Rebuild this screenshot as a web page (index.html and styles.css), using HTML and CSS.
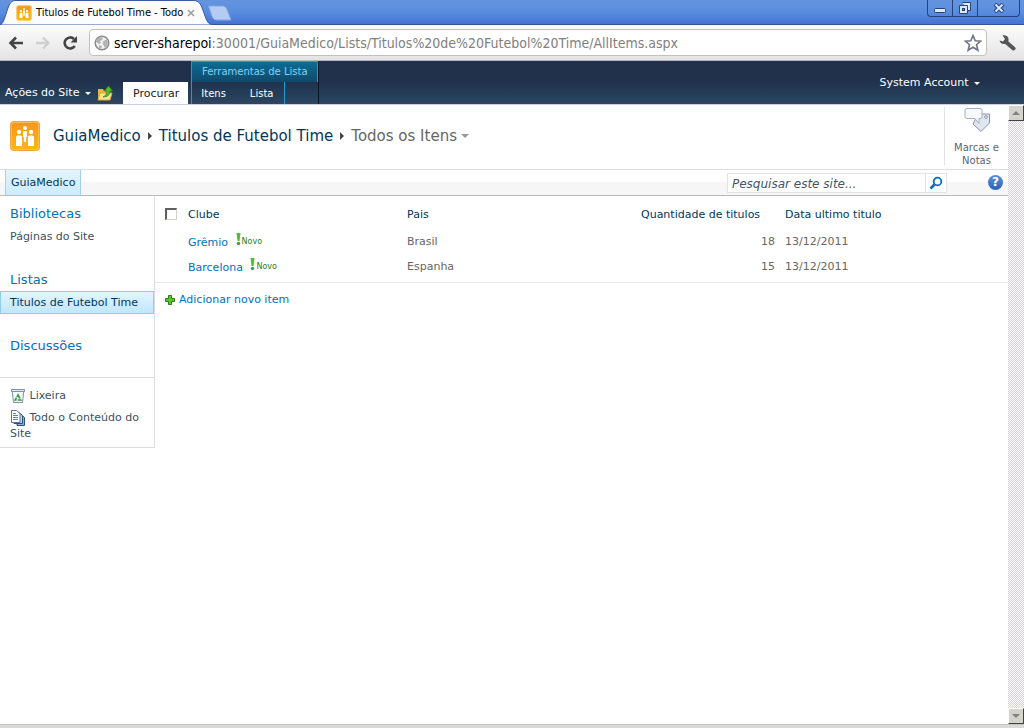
FILE: index.html
```html
<!DOCTYPE html>
<html lang="pt-BR">
<head>
    <meta charset="UTF-8">
    <title>Titulos de Futebol Time - Todos os Itens</title>
    <link rel="stylesheet" href="styles.css">
</head>
<body>
    <!-- logo do site, usado na aba e no titulo -->
    <svg class="defs" width="0" height="0" aria-hidden="true">
        <defs>
            <linearGradient id="orange" x1="0" y1="0" x2="0" y2="1">
                <stop offset="0" stop-color="#f7941d"/>
                <stop offset="1" stop-color="#ffb90f"/>
            </linearGradient>
            <symbol id="logo" viewBox="0 0 32 32">
                <rect x="1.500" y="1.500" width="29" height="29" rx="3" fill="url(#orange)" stroke="#f2a33c"/>
                <rect x="2.500" y="2.500" width="27" height="27" rx="2" fill="none" stroke="#ffcb6b" stroke-opacity=".7"/>
                <circle cx="10" cy="12" r="2.200" fill="#fff"/>
                <circle cx="16" cy="8" r="2" fill="#fff"/>
                <circle cx="22" cy="12" r="2.200" fill="#fff"/>
                <path d="M7 17q0-1.500 1.500-1.500h3q1.500 0 1.500 1.500v9H7z M19 17q0-1.500 1.500-1.500h3q1.500 0 1.500 1.500v9h-6z" fill="#fff"/>
                <path d="M14 11h4v6h-.8V22h-2.400v-5h-.8z" fill="#fff"/>
            </symbol>
        </defs>
    </svg>

    <header class="tab-strip">
        <div class="tab">
            <svg class="tab-shape" width="236" height="25" viewBox="0 0 236 25">
                <path d="M0 25C3 24 4 20 6 14C9 5 10 1 15 .5H193C200 .5 201 5 204 13C207 22 208 24 213 25z" fill="#fcfcfd" stroke="#3a5a9c"/>
                <path d="M208.500 6h14c3 0 4 2 5.500 6l3 8h-14c-3 0-4-1-5.500-5z" fill="#b4cbf3" stroke="#83a5e0"/>
            </svg>
            <svg class="tab-icon" width="16" height="16"><use href="#logo"/></svg>
            <span class="tab-title">Titulos de Futebol Time - Todo</span>
            <button class="tab-close" aria-label="Fechar guia">
                <svg width="8" height="8" viewBox="0 0 8 8"><path d="M1 1l6 6M7 1L1 7" stroke="#9b9b9b" stroke-width="1.500"/></svg>
            </button>
        </div>
        <div class="window-buttons">
            <button aria-label="Minimizar"><svg width="12" height="12" viewBox="0 0 12 12"><rect x=".5" y="6.500" width="11" height="4" rx="1" fill="#dce9ff" stroke="#24437c"/></svg></button>
            <button aria-label="Restaurar"><svg width="14" height="12" viewBox="0 0 14 12"><path d="M4.500 .5h8v8h-3M1.500 3.500h8v8h-8z" fill="#dce9ff" stroke="#24437c"/><rect x="4.500" y="6.500" width="2" height="2" fill="#5b8de0" stroke="#24437c"/></svg></button>
            <button class="close" aria-label="Fechar"><svg width="12" height="10" viewBox="0 0 12 10"><path d="M2 1l8 8M10 1L2 9" stroke="#24437c" stroke-width="4"/><path d="M2.500 1.500l7 7M9.500 1.500l-7 7" stroke="#dce9ff" stroke-width="2"/></svg></button>
        </div>
    </header>

    <div class="toolbar">
        <button aria-label="Voltar"><svg width="16" height="16" viewBox="0 0 16 16"><path d="M15 8H3M8 2.500L2.500 8L8 13.500" fill="none" stroke="#444" stroke-width="2.600"/></svg></button>
        <button aria-label="Avançar"><svg width="16" height="16" viewBox="0 0 16 16"><path d="M1 8h12M8 2.500L13.500 8L8 13.500" fill="none" stroke="#cfcfcf" stroke-width="2.400"/></svg></button>
        <button aria-label="Recarregar"><svg width="16" height="16" viewBox="0 0 16 16"><path d="M12.700 11A5.500 5.500 0 1 1 12 4" fill="none" stroke="#444" stroke-width="2.600"/><path d="M15 1v6.500H8.500z" fill="#444"/></svg></button>
        <div class="address">
            <svg width="16" height="16" viewBox="0 0 16 16"><circle cx="8" cy="8" r="6.800" fill="#f2f2f2" stroke="#8b8b8b" stroke-width="1.500"/><path d="M2.500 4.500L6 2l3 1-1 2-2 1 1 2-2 1-3-2zM9.500 6l3-1.500L14 7l-1 4-2 2-1.500-3-1-1.500zM5 10l3 1-1 3-2-1z" fill="#b3b3b3"/></svg>
            <div class="url"><span class="host">server-sharepoi</span>:30001/GuiaMedico/Lists/Titulos%20de%20Futebol%20Time/AllItems.aspx</div>
            <button aria-label="Favoritos"><svg width="18" height="18" viewBox="0 0 18 18"><path d="M9 1.500l2.200 5.200 5.500.4-4.200 3.600 1.400 5.600L9 13.300l-4.900 3 1.400-5.600L1.300 7.100l5.500-.4z" fill="#fff" stroke="#6f7487" stroke-width="1.600"/></svg></button>
        </div>
        <button aria-label="Configurações"><svg width="18" height="18" viewBox="0 0 18 18"><path d="M8 8l7.500 6.500" stroke="#555" stroke-width="4" stroke-linecap="round"/><path d="M4.500 1.500Q9 .5 10.500 4.500Q11 9 7 10Q2.500 10.500 1.500 6.500L5 7.500L7 5z" fill="#555"/></svg></button>
    </div>

    <nav class="ribbon">
        <a href="#" class="site-actions">Ações do Site <span class="arrow"></span></a>
        <a href="#" class="nav-up" aria-label="Navegar para cima">
            <svg width="16" height="16" viewBox="0 0 16 16"><path d="M1 4h5l1 2h6v8H1z" fill="#e6b73c"/><path d="M1 15L3 8h12l-2 7z" fill="#ffe492" stroke="#e0a92b"/><path d="M6 12Q10 11 10 6H7.500L11.500 1L15.500 6H13Q13 12 6 12z" fill="#58bd2c" stroke="#2f8a14" stroke-width=".8"/></svg>
        </a>
        <a href="#" class="browse">Procurar</a>
        <div class="list-tools">
            <div class="list-tools-title">Ferramentas de Lista</div>
            <div class="list-tools-tabs">
                <a href="#">Itens</a>
                <a href="#">Lista</a>
            </div>
        </div>
        <a href="#" class="account">System Account <span class="arrow"></span></a>
    </nav>

    <div class="viewport">
        <main class="page">
            <div class="title-row">
                <svg class="site-logo" width="32" height="32"><use href="#logo"/></svg>
                <h1 class="breadcrumb">
                    <a href="#">GuiaMedico</a>
                    <span class="separator"></span>
                    <a href="#">Titulos de Futebol Time</a>
                    <span class="separator"></span>
                    <span class="view">Todos os Itens</span>
                    <span class="arrow gray"></span>
                </h1>
                <a href="#" class="tags">
                    <svg width="28" height="26" viewBox="0 0 28 26"><path d="M13 11l5-4h8.500v9L18 24.500L10 17z" fill="#dfe6f0" stroke="#8793ad"/><circle cx="23" cy="10" r="1.300" fill="#fff" stroke="#8793ad"/><path d="M4 1.500h13q2 0 2 2v6q0 2-2 2h-1v5l-4-5H4q-2 0-2-2v-6q0-2 2-2z" fill="#f7f9fc" stroke="#a4aec2"/></svg>
                    Marcas e Notas
                </a>
            </div>

            <div class="top-nav">
                <a href="#" class="top-link">GuiaMedico</a>
                <form class="search">
                    <input type="text" placeholder="Pesquisar este site..." aria-label="Pesquisar este site">
                    <button type="submit" aria-label="Pesquisar"><svg width="14" height="14" viewBox="0 0 14 14"><path d="M6 8L1.500 12.500" stroke="#0072bc" stroke-width="2.600"/><circle cx="8.500" cy="5.500" r="3.800" fill="#fff" stroke="#0072bc" stroke-width="1.800"/></svg></button>
                </form>
                <a href="#" class="help" aria-label="Ajuda">?</a>
            </div>

            <div class="columns">
                <aside class="side-nav">
                    <div class="group">
                        <h2><a href="#">Bibliotecas</a></h2>
                        <a href="#" class="item">Páginas do Site</a>
                    </div>
                    <div class="group">
                        <h2><a href="#">Listas</a></h2>
                        <a href="#" class="item selected">Titulos de Futebol Time</a>
                    </div>
                    <div class="group">
                        <h2><a href="#">Discussões</a></h2>
                    </div>
                    <div class="special">
                        <a href="#"><svg width="16" height="16" viewBox="0 0 16 16"><path d="M2 1.500h12l-1.500 13h-9z" fill="#f4f8fa" stroke="#7d93a5"/><path d="M1.500 1.500h13v2h-13z" fill="#dfe9ef" stroke="#7d93a5"/><path d="M8 7l2.800 5H5.200z" fill="none" stroke="#2f9a45" stroke-width="1.600" stroke-dasharray="4 1"/></svg> Lixeira</a>
                        <a href="#"><svg width="16" height="16" viewBox="0 0 16 16"><path d="M7 4.500h4l3.500 3v8H7z" fill="#8fb0d6" stroke="#2c5078"/><path d="M4 2.500h5l3.500 3v8H4z" fill="#c3d6ec" stroke="#2c5078"/><path d="M1.500 .5h5l3.500 3v9H1.500z" fill="#fff" stroke="#54759c"/><path d="M3 3.500h3M3 5.500h5M3 7.500h5M3 9.500h5" stroke="#5d86b5"/></svg> Todo o Conteúdo do Site</a>
                    </div>
                </aside>

                <section class="list">
                    <table>
                        <colgroup>
                            <col class="col-check"><col class="col-clube"><col class="col-pais"><col class="col-qtd"><col>
                        </colgroup>
                        <thead>
                            <tr>
                                <th><input type="checkbox" aria-label="Selecionar todos"></th>
                                <th>Clube</th>
                                <th>Pais</th>
                                <th>Quantidade de titulos</th>
                                <th>Data ultimo titulo</th>
                            </tr>
                        </thead>
                        <tbody>
                            <tr>
                                <td></td>
                                <td><a href="#">Grêmio</a> <span class="new"><svg width="5" height="13" viewBox="0 0 5 13"><path d="M.5 0h4l-1 8h-2z" fill="#4fc12b"/><circle cx="2.500" cy="10.500" r="1.700" fill="#3fa51e"/></svg>Novo</span></td>
                                <td>Brasil</td>
                                <td class="number">18</td>
                                <td>13/12/2011</td>
                            </tr>
                            <tr>
                                <td></td>
                                <td><a href="#">Barcelona</a> <span class="new"><svg width="5" height="13" viewBox="0 0 5 13"><path d="M.5 0h4l-1 8h-2z" fill="#4fc12b"/><circle cx="2.500" cy="10.500" r="1.700" fill="#3fa51e"/></svg>Novo</span></td>
                                <td>Espanha</td>
                                <td class="number">15</td>
                                <td>13/12/2011</td>
                            </tr>
                        </tbody>
                    </table>
                    <a href="#" class="add">
                        <svg width="10" height="10" viewBox="0 0 10 10"><path d="M3.500 .5h3v3h3v3h-3v3h-3v-3h-3v-3h3z" fill="#5cc42d" stroke="#2b7d12"/></svg>
                        Adicionar novo item
                    </a>
                </section>
            </div>
        </main>

        <div class="scrollbar">
            <button aria-label="Rolar para cima"><svg width="8" height="4" viewBox="0 0 8 4"><path d="M4 0l4 4H0z" fill="#808080"/></svg></button>
            <button aria-label="Rolar para baixo"><svg width="8" height="4" viewBox="0 0 8 4"><path d="M0 0h8L4 4z" fill="#808080"/></svg></button>
        </div>
    </div>
    <div class="window-edge"></div>
</body>
</html>
```
FILE: styles.css
```css
* {
    box-sizing: border-box;
}

body {
    margin: 0;
    height: 100vh;
    display: flex;
    flex-direction: column;
    overflow: hidden;
    background: #fff;
    color: #4c535c;
    font-family: "DejaVu Sans", Verdana, sans-serif;
    font-size: 11px;
    line-height: 16px;
}

a {
    color: #0072bc;
    text-decoration: none;
}

button {
    display: flex;
    align-items: center;
    justify-content: center;
    padding: 0;
    border: none;
    background: none;
}

svg {
    flex: none;
}

.defs {
    position: absolute;
}

/* janela do navegador */
.tab-strip {
    display: flex;
    justify-content: space-between;
    align-items: flex-start;
    height: 25px;
    flex: none;
    padding-right: 4px;
    background: linear-gradient(#6494dc, #5a8de0 50%, #4672d2);
    border-bottom: 1px solid #35538f;
}

.tab {
    position: relative;
    display: flex;
    align-items: center;
    gap: 4px;
    width: 208px;
    height: 25px;
    padding: 0 13px 0 16px;
    color: #000;
    font-family: "DejaVu Sans Condensed", Tahoma, sans-serif;
}

.tab-shape {
    position: absolute;
    top: 0;
    left: 0;
}

.tab-icon,
.tab-title,
.tab-close {
    position: relative;
}

.tab-title {
    flex: 1;
    white-space: nowrap;
}

.window-buttons {
    display: flex;
    border: 1px solid #24437c;
    border-top: none;
    border-radius: 0 0 4px 4px;
}

.window-buttons button {
    width: 25px;
    height: 16px;
    border-right: 1px solid #24437c;
}

.window-buttons .close {
    width: 41px;
    border-right: none;
}

.toolbar {
    display: flex;
    align-items: center;
    gap: 11px;
    height: 36px;
    flex: none;
    padding: 0 8px;
    background: linear-gradient(#fcfcfd, #e4e4e4);
    border-bottom: 1px solid #b5b9bd;
}

.address {
    display: flex;
    flex: 1;
    align-items: center;
    gap: 4px;
    min-width: 0;
    height: 27px;
    padding: 0 4px;
    background: #fff;
    border: 1px solid #c6c1b8;
    border-radius: 4px;
}

.url {
    flex: 1;
    overflow: hidden;
    white-space: nowrap;
    color: #808080;
    font-family: "DejaVu Sans Condensed", Tahoma, sans-serif;
    font-size: 14px;
    line-height: 20px;
}

.host {
    color: #000;
}

/* faixa de opcoes */
.ribbon {
    display: flex;
    align-items: flex-end;
    height: 44px;
    flex: none;
    background: linear-gradient(#21304b 45%, #25415b 85%, #35435e);
    border-bottom: 1px solid #c9d3e2;
}

.ribbon a {
    color: #fff;
}

.arrow {
    display: inline-block;
    margin-left: 2px;
    border: 3px solid transparent;
    border-top-color: currentColor;
    border-bottom: none;
    vertical-align: middle;
}

.site-actions {
    width: 97px;
    padding: 0 0 3px 5px;
    white-space: nowrap;
}

.nav-up {
    display: flex;
    width: 26px;
    padding-bottom: 3px;
}

.ribbon .browse {
    height: 22px;
    margin-right: 3px;
    padding: 4px 9px 0 10px;
    background: #fff;
    color: #222;
}

.list-tools {
    width: 128px;
    height: 43px;
    border-left: 1px solid #1b9fd0;
    border-right: 1px solid #0c1526;
}

.list-tools-title {
    height: 21px;
    padding-top: 2px;
    border-top: 1px solid #1b9fd0;
    border-right: 1px solid #1b9fd0;
    background: linear-gradient(#0b6d94, #12486b);
    color: #7fd3f7;
    font-size: 10px;
    text-align: center;
    white-space: nowrap;
}

.list-tools-tabs {
    display: flex;
    gap: 24px;
    width: 93px;
    height: 22px;
    padding: 4px 0 0 9px;
    border-right: 1px solid #1b9fd0;
}

.list-tools-tabs a {
    font-size: 10px;
}

.account {
    margin-left: auto;
    padding: 0 44px 13px 0;
}

/* pagina */
.viewport {
    display: flex;
    flex: 1;
    min-height: 0;
}

.page {
    flex: 1;
    min-width: 0;
}

.title-row {
    display: flex;
    align-items: center;
    height: 65px;
    padding: 0 0 2px 9px;
    border-bottom: 1px solid #dbdddf;
}

.breadcrumb {
    display: flex;
    flex: 1;
    align-items: center;
    margin: 0;
    padding-left: 12px;
    font-size: 15px;
    font-weight: normal;
    line-height: 20px;
    white-space: nowrap;
}

.breadcrumb a {
    color: #003759;
}

.separator {
    margin: 0 7px;
    border: 4px solid transparent;
    border-left-color: #444;
    border-right: none;
}

.view {
    color: #666;
}

.arrow.gray {
    margin-left: 4px;
    border-width: 4px 4px 0;
    color: #999;
}

.tags {
    display: flex;
    flex-direction: column;
    align-items: center;
    gap: 8px;
    width: 64px;
    height: 58px;
    padding: 0 8px;
    border-left: 1px solid #e0e2e5;
    color: #5a6578;
    font-size: 10px;
    line-height: 13px;
    text-align: center;
}

.top-nav {
    display: flex;
    align-items: center;
    height: 26px;
    padding: 0 5px;
    background: linear-gradient(#fff 50%, #f6f6f6 50%);
    border-bottom: 1px solid #b8babd;
}

.top-link {
    align-self: stretch;
    padding: 5px 5px 4px;
    border: 1px solid #a5cfe6;
    border-width: 0 1px;
    background: linear-gradient(#e3f5ff, #cbecff);
    color: #003759;
}

.search {
    display: flex;
    width: 220px;
    height: 20px;
    margin: 0 41px 0 auto;
    border: 1px solid #e3e3e3;
    background: #fff;
}

.search input {
    flex: 1;
    min-width: 0;
    padding: 2px 4px 0;
    border: none;
    background: none;
    font: italic 12px "DejaVu Sans", Verdana, sans-serif;
}

.search input::placeholder {
    color: #44546a;
}

.search button {
    width: 21px;
    border-left: 1px solid #e3e3e3;
}

.help {
    width: 15px;
    height: 15px;
    border-radius: 50%;
    background: linear-gradient(#5b8fdc, #2f62b8);
    color: #fff;
    font-size: 12px;
    font-weight: bold;
    line-height: 15px;
    text-align: center;
}

.columns {
    display: flex;
    align-items: flex-start;
}

.side-nav {
    width: 155px;
    flex: none;
    padding-top: 8px;
    border: 1px solid #dbddde;
    border-width: 0 1px 1px 0;
}

.group {
    padding-bottom: 20px;
}

.group + .group {
    padding-top: 2px;
}

.group h2 {
    margin: 0;
    padding: 0 10px 1px;
    font-size: 13px;
    font-weight: normal;
    line-height: 20px;
}

.item {
    display: block;
    height: 23px;
    padding: 3px 9px;
    border: 1px solid transparent;
    color: #3b4f65;
    white-space: nowrap;
}

.item.selected {
    border-color: #91cde8;
    background: linear-gradient(#e3f5ff, #c0e7fd);
    color: #003759;
}

.special {
    padding: 7px 8px 2px 10px;
    border-top: 1px solid #dbddde;
}

.special a {
    display: block;
    padding: 3px 0;
    color: #3b4f65;
}

.special svg {
    vertical-align: middle;
}

.list {
    flex: 1;
    min-width: 0;
}

table {
    width: 100%;
    padding-bottom: 3px;
    border-bottom: 1px solid #ebebeb;
    border-spacing: 0;
    table-layout: fixed;
}

th,
td {
    height: 25px;
    padding: 0;
    color: #666;
    font-weight: normal;
    text-align: left;
    white-space: nowrap;
}

th {
    height: 33px;
    padding-top: 4px;
    color: #003759;
}

.col-check {
    width: 33px;
}

.col-clube {
    width: 219px;
}

.col-pais {
    width: 234px;
}

.col-qtd {
    width: 144px;
}

.number {
    padding-right: 10px;
    text-align: right;
}

th input {
    display: block;
    appearance: none;
    width: 12px;
    height: 12px;
    margin: 0 0 2px 10px;
    border: 2px solid #606060;
    border-right: 1px solid #d4d0c8;
    border-bottom: 1px solid #d4d0c8;
    background: #fff;
}

.new {
    display: inline-flex;
    align-items: flex-end;
    gap: 1px;
    margin-left: 4px;
    color: #2b7d12;
    font-size: 8px;
    line-height: 9px;
}

.add {
    display: flex;
    align-items: center;
    gap: 4px;
    padding: 9px 10px;
}

.scrollbar {
    display: flex;
    flex-direction: column;
    justify-content: space-between;
    width: 16px;
    background: repeating-conic-gradient(#fff 0 25%, #d4d4c8 0 50%) 0 0 / 2px 2px;
}

.scrollbar button {
    width: 16px;
    height: 16px;
    border: 1px solid;
    border-color: #fff #404040 #404040 #fff;
    background: #d4d4cc;
}

.window-edge {
    height: 4px;
    flex: none;
    background: #dadad6;
    border-top: 1px solid #c4c4c0;
}
```
